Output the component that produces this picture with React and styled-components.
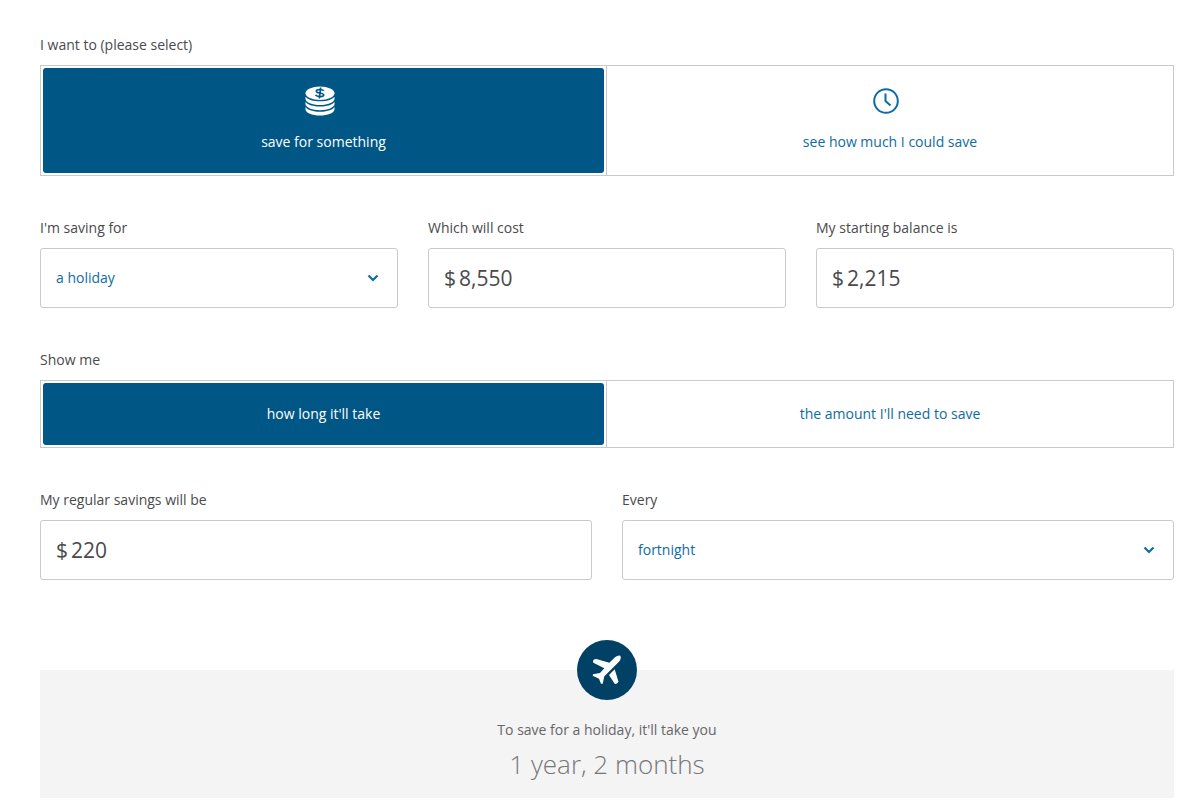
import React, { useState } from 'react';
import styled, { createGlobalStyle } from 'styled-components';

const GlobalStyle = createGlobalStyle`
  *, *::before, *::after {
    box-sizing: border-box;
  }
  body {
    margin: 0;
    background: #ffffff;
    color: #4a4a4d;
    font-family: "Open Sans", "Noto Sans", sans-serif;
    font-size: 14px;
    line-height: 20px;
  }
  button, input, select {
    font: inherit;
    color: inherit;
  }
`;

const Page = styled.main`
  display: flex;
  flex-direction: column;
  gap: 42px;
  padding: 35px 21px 9px 40px;
`;

const Row = styled.div`
  display: grid;
  grid-template-columns: repeat(${props => props.$columns}, 1fr);
  gap: 30px;
`;

const FieldBlock = styled.div`
  display: flex;
  flex-direction: column;
  gap: 10px;
  min-width: 0;
`;

const FieldLabel = styled.label`
  display: block;
`;

const ToggleGroup = styled.div`
  display: grid;
  grid-template-columns: 1fr 1fr;
  border: 1px solid #c9cacc;
`;

const ToggleOption = styled.label`
  position: relative;
  display: flex;
  flex-direction: column;
  align-items: center;
  justify-content: center;
  gap: 16px;
  min-height: ${props => (props.$tall ? '105px' : '62px')};
  padding-bottom: ${props => (props.$tall ? '3px' : '0')};
  margin: 2px;
  border-radius: 3px;
  color: #0f6ba1;
  cursor: pointer;

  > svg {
    margin-right: 8px;
  }

  &:has(input:checked) {
    background: #005684;
    color: #ffffff;
  }
`;

const ToggleCell = styled.div`
  &:first-child {
    border-right: 1px solid #c9cacc;
  }
`;

const HiddenRadio = styled.input`
  position: absolute;
  inset: 0;
  margin: 0;
  opacity: 0;
  cursor: pointer;
`;

const Control = styled.div`
  display: flex;
  align-items: center;
  height: 60px;
  border: 1px solid #c9cacc;
  border-radius: 3px;
  background: #ffffff;
`;

const AmountControl = styled(Control)`
  gap: 3px;
  padding: 0 15px;
  font-size: 21px;
  line-height: 30px;
`;

const AmountInput = styled.input`
  flex: 1;
  min-width: 0;
  padding: 0;
  border: 0;
  outline: 0;
  background: transparent;
`;

const SelectControl = styled(Control)`
  display: grid;
  color: #0f6ba1;

  > * {
    grid-area: 1 / 1;
  }
  > svg {
    justify-self: end;
    margin-right: 18px;
    pointer-events: none;
  }
`;

const SelectBox = styled.select`
  appearance: none;
  width: 100%;
  height: 58px;
  padding: 0 40px 0 15px;
  border: 0;
  outline: 0;
  background: transparent;
  cursor: pointer;
`;

const Result = styled.section`
  display: flex;
  flex-direction: column;
  align-items: center;
  margin-top: 48px;
  padding-bottom: 14px;
  background: #f4f4f4;
  text-align: center;
`;

const ResultBadge = styled.div`
  display: flex;
  align-items: center;
  justify-content: center;
  width: 60px;
  height: 60px;
  margin-top: -30px;
  border-radius: 50%;
  background: #004165;
  color: #ffffff;
`;

const ResultText = styled.p`
  margin: 20px 0 0;
  color: #666669;
`;

const ResultValue = styled.p`
  margin: 4px 0 0;
  color: #77777a;
  font-size: 26px;
  font-weight: 300;
  line-height: 40px;
`;

const CoinsIcon = () => (
  <svg width="30" height="30" viewBox="0 0 30 30" aria-hidden="true">
    <g fill="currentColor">
      <ellipse cx="15" cy="7.2" rx="14.5" ry="6.7" />
      <path d="M.5 10.8C3 14 8.5 15.300 15 15.300S27 14 29.500 10.800V13C29 16.500 23 19 15 19S1 16.500.5 13Z" />
      <path d="M.5 15.800C3 19.200 8.500 20.500 15 20.500S27 19.200 29.500 15.800V18.300C29 21.700 23 24.200 15 24.200S1 21.700.5 18.300Z" />
      <path d="M.5 21C3 24.400 8.500 25.700 15 25.700S27 24.400 29.500 21V23.500C29 27 23 29.500 15 29.500S1 27 .5 23.500Z" />
    </g>
    <path
      d="M18.800 4.800C17.500 3.200 11.500 2.800 11.300 5.200C11.200 7.500 18.700 6.500 18.700 9C18.600 11.400 12 10.800 10.500 9M15.700 1.500L14.300 12.500"
      fill="none"
      stroke="#005684"
      strokeWidth="1.7"
    />
  </svg>
);

const ClockIcon = () => (
  <svg width="30" height="30" viewBox="0 0 30 30" fill="none" stroke="currentColor" strokeWidth="2" aria-hidden="true">
    <circle cx="15" cy="15" r="11.800" />
    <path d="M14.500 7.500V15L19.500 19.500" />
  </svg>
);

const PlaneIcon = () => (
  <svg width="42" height="42" viewBox="0 0 126 126" fill="currentColor" aria-hidden="true">
    <path d="M21 37Q22 30 31 30L70 41L87 25Q95 18 103 20Q107 28 99 38L55 82L50 104L45 104L39 89L20 80L21 76L42 72L55 58L22 41Z" />
    <path d="M69 78L86 61L97 97Q96 104 90 105L86 104Z" />
  </svg>
);

const ChevronIcon = () => (
  <svg width="12" height="8" viewBox="0 0 12 8" fill="none" stroke="currentColor" strokeWidth="2.2" aria-hidden="true">
    <path d="M1.500 1.500L6 6L10.500 1.500" />
  </svg>
);

function Toggle({ id, label, options, value, onChange }) {
  return (
    <FieldBlock role="radiogroup" aria-labelledby={id}>
      <div id={id}>{label}</div>
      <ToggleGroup>
        {options.map(({ key, text, icon: Icon }) => (
          <ToggleCell key={key}>
            <ToggleOption $tall={Boolean(Icon)}>
              <HiddenRadio
                type="radio"
                name={id}
                value={key}
                checked={value === key}
                onChange={() => onChange(key)}
              />
              {Icon && <Icon />}
              <span>{text}</span>
            </ToggleOption>
          </ToggleCell>
        ))}
      </ToggleGroup>
    </FieldBlock>
  );
}

function Amount({ id, label, value, onChange }) {
  return (
    <FieldBlock>
      <FieldLabel htmlFor={id}>{label}</FieldLabel>
      <AmountControl>
        <span>$</span>
        <AmountInput id={id} type="text" value={value} onChange={e => onChange(e.target.value)} />
      </AmountControl>
    </FieldBlock>
  );
}

function Dropdown({ id, label, options, value, onChange }) {
  return (
    <FieldBlock>
      <FieldLabel htmlFor={id}>{label}</FieldLabel>
      <SelectControl>
        <SelectBox id={id} value={value} onChange={e => onChange(e.target.value)}>
          {options.map(option => (
            <option key={option}>{option}</option>
          ))}
        </SelectBox>
        <ChevronIcon />
      </SelectControl>
    </FieldBlock>
  );
}

const goals = [
  { key: 'something', text: 'save for something', icon: CoinsIcon },
  { key: 'howMuch', text: 'see how much I could save', icon: ClockIcon },
];

const views = [
  { key: 'time', text: "how long it'll take" },
  { key: 'amount', text: "the amount I'll need to save" },
];

export default function App() {
  const [goal, setGoal] = useState('something');
  const [view, setView] = useState('time');
  const [item, setItem] = useState('a holiday');
  const [cost, setCost] = useState('8,550');
  const [balance, setBalance] = useState('2,215');
  const [savings, setSavings] = useState('220');
  const [period, setPeriod] = useState('fortnight');

  return (
    <>
      <GlobalStyle />
      <Page>
        <Toggle id="goal" label="I want to (please select)" options={goals} value={goal} onChange={setGoal} />
        <Row $columns={3}>
          <Dropdown id="item" label="I'm saving for" options={['a holiday']} value={item} onChange={setItem} />
          <Amount id="cost" label="Which will cost" value={cost} onChange={setCost} />
          <Amount id="balance" label="My starting balance is" value={balance} onChange={setBalance} />
        </Row>
        <Toggle id="view" label="Show me" options={views} value={view} onChange={setView} />
        <Row $columns={2}>
          <Amount id="savings" label="My regular savings will be" value={savings} onChange={setSavings} />
          <Dropdown id="period" label="Every" options={['fortnight']} value={period} onChange={setPeriod} />
        </Row>
        <Result>
          <ResultBadge>
            <PlaneIcon />
          </ResultBadge>
          <ResultText>To save for {item}, it'll take you</ResultText>
          <ResultValue>1 year, 2 months</ResultValue>
        </Result>
      </Page>
    </>
  );
}
